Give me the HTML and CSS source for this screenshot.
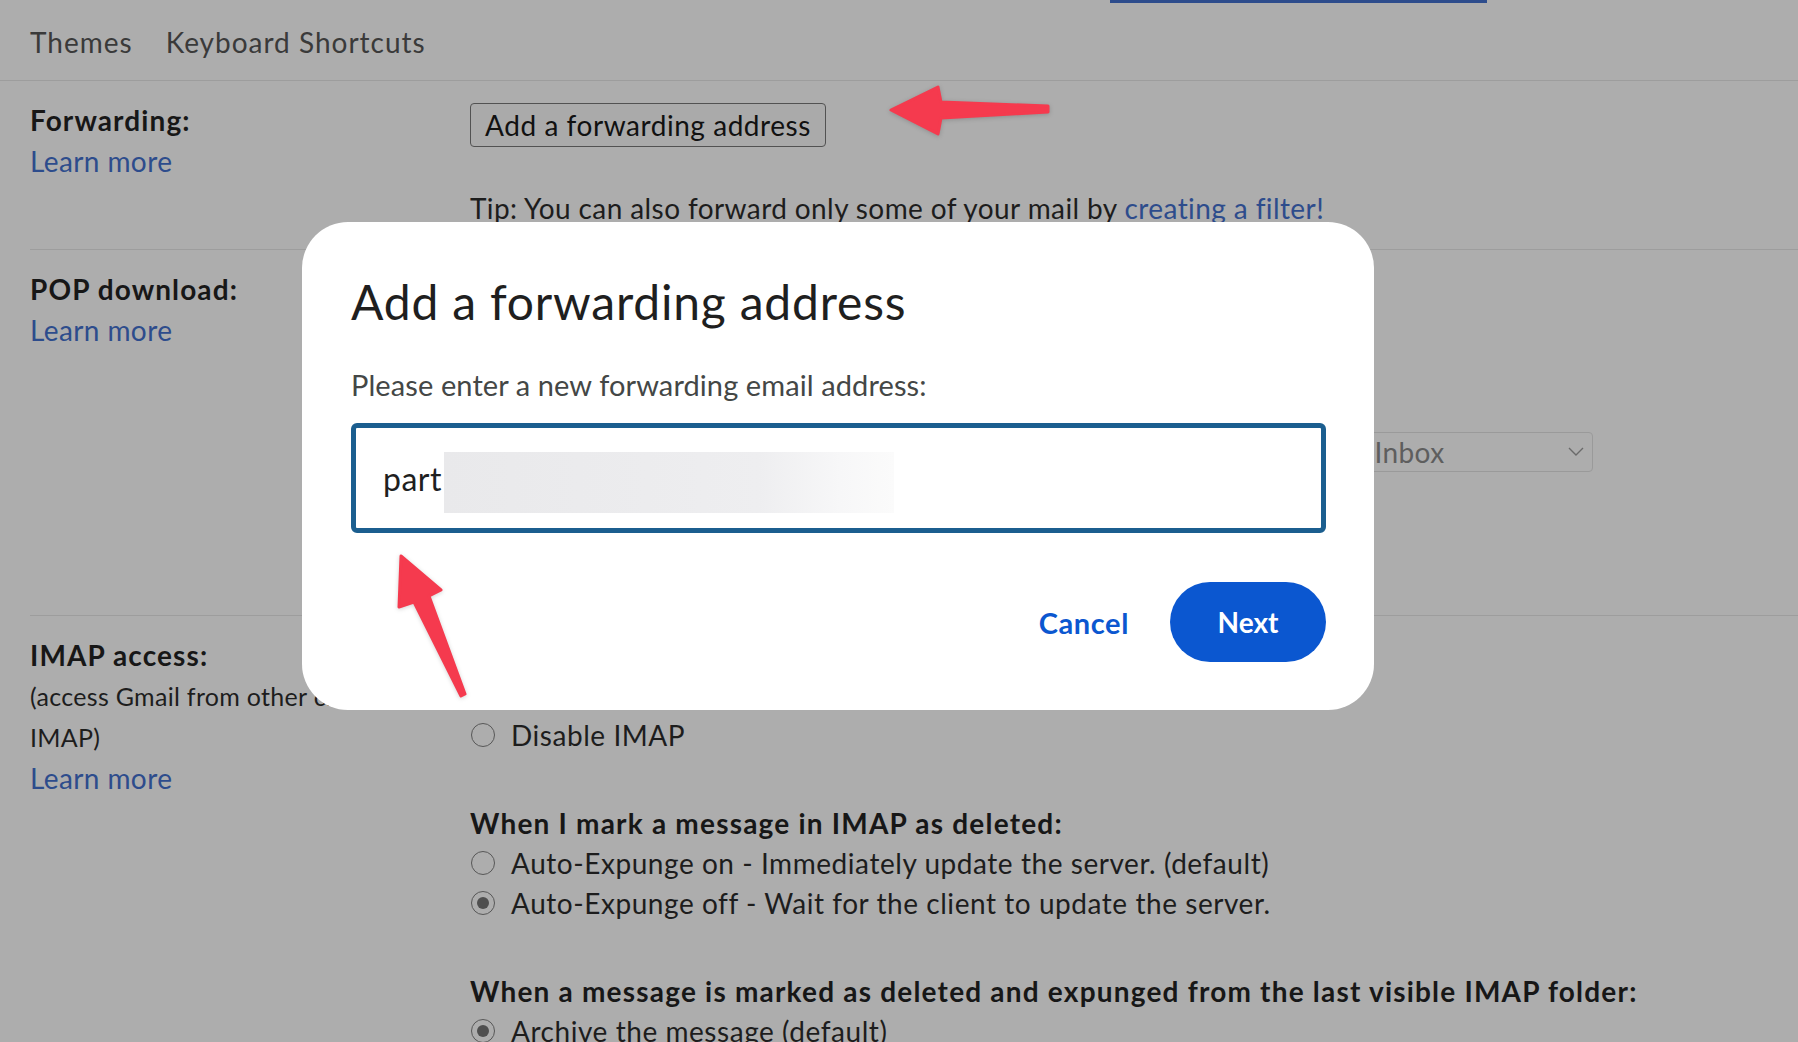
FILE: index.html
```html
<!DOCTYPE html>
<html lang="en">
<head>
<meta charset="utf-8">
<title>Settings – Forwarding and POP/IMAP</title>
<link rel="stylesheet" href="styles.css">
</head>
<body>
<div class="page">
  <div class="tabbar">
    <div class="indicator"></div>
    <nav class="tabs">
      <span class="tab">Themes</span>
      <span class="tab">Keyboard Shortcuts</span>
    </nav>
  </div>

  <div class="settings">
    <section class="row row-fwd">
      <div class="label">
        <div class="label-title">Forwarding:</div>
        <a class="link">Learn more</a>
      </div>
      <div class="content">
        <button class="gbtn">Add a forwarding address</button>
        <p class="tip">Tip: You can also forward only some of your mail by <a class="link">creating a filter!</a></p>
      </div>
    </section>

    <section class="row row-pop">
      <div class="label">
        <div class="label-title">POP download:</div>
        <a class="link">Learn more</a>
      </div>
      <div class="content">
        <div class="line"><b>1. Status: </b>POP is disabled</div>
        <label class="opt"><span class="radio"></span>Enable POP for <b>&nbsp;all mail</b></label>
        <label class="opt"><span class="radio"></span>Enable POP for <b>&nbsp;mail that arrives from now on</b></label>
        <div class="line pop-line gap"><b class="pop-q">2. When messages are accessed with POP</b>
          <div class="select"><span>keep Gmail's copy in the Inbox</span>
            <svg class="chev" viewBox="0 0 16 10" width="16" height="10"><polyline points="1,1 8,8 15,1" fill="none" stroke="#6a6a6a" stroke-width="1.4"/></svg>
          </div>
        </div>
        <div class="line gap"><b>3. Configure your email client</b> (e.g. Outlook, Eudora, Netscape Mail)</div>
        <div class="line"><a class="link">Configuration instructions</a></div>
      </div>
    </section>

    <section class="row row-imap">
      <div class="label">
        <div class="label-title">IMAP access:</div>
        <div class="label-note">(access Gmail from other clients using</div>
        <div class="label-note">IMAP)</div>
        <a class="link">Learn more</a>
      </div>
      <div class="content">
        <div class="line"><b>1. Status: </b>IMAP is disabled</div>
        <label class="opt"><span class="radio"></span>Enable IMAP</label>
        <label class="opt"><span class="radio"></span>Disable IMAP</label>
        <div class="line gap"><b>When I mark a message in IMAP as deleted:</b></div>
        <label class="opt"><span class="radio"></span>Auto-Expunge on - Immediately update the server. (default)</label>
        <label class="opt"><span class="radio checked"></span>Auto-Expunge off - Wait for the client to update the server.</label>
        <div class="line gap"><b>When a message is marked as deleted and expunged from the last visible IMAP folder:</b></div>
        <label class="opt"><span class="radio checked"></span>Archive the message (default)</label>
      </div>
    </section>
  </div>

  <svg class="arrow arrow-top" viewBox="0 0 170 58" width="170" height="58">
    <path d="M6 28 L53 5 L56 20 L163 24 L163 30 L56 36 L53 52 Z" fill="#f53a4e" stroke="#f53a4e" stroke-width="3" stroke-linejoin="round"/>
  </svg>

  <div class="dialog" role="dialog">
    <h2 class="dialog-title">Add a forwarding address</h2>
    <div class="dialog-label">Please enter a new forwarding email address:</div>
    <div class="email">
      <span class="typed">part</span>
      <span class="blur"></span>
    </div>
    <div class="actions">
      <button class="cancel">Cancel</button>
      <button class="next">Next</button>
    </div>
  </div>

  <svg class="arrow arrow-bottom" viewBox="0 0 80 152" width="80" height="152">
    <path d="M9 6 L49 40 L37 46 L73 144 L69 146 L22 52 L7 57 Z" fill="#f53a4e" stroke="#f53a4e" stroke-width="3" stroke-linejoin="round"/>
  </svg>
</div>
</body>
</html>
```

FILE: styles.css
```css
html, body {
  margin: 0;
  padding: 0;
}

body {
  background: #adadad;
  font-family: "Lato", "Noto Sans", sans-serif;
  color: #1d1d1d;
}

.page {
  position: relative;
  width: 1798px;
  height: 1042px;
  overflow: hidden;
  background: #adadad;
}

/* ---------- tab bar ---------- */
.tabbar {
  box-sizing: border-box;
  height: 81px;
  border-bottom: 1px solid #9d9d9d;
  display: flex;
  flex-direction: column;
}

.indicator {
  margin-left: 1110px;
  width: 377px;
  height: 3px;
  background: #2d4c8c;
}

.tabs {
  flex: 1;
  display: flex;
  align-items: center;
  gap: 33px;
  padding-left: 30px;
  font-size: 28px;
  letter-spacing: 1px;
  color: #3a3a3a;
}

/* ---------- settings rows ---------- */
.settings {
  margin-left: 30px;
}

.row {
  box-sizing: border-box;
  display: grid;
  grid-template-columns: 440px 1fr;
  padding-top: 19px;
}

.row + .row {
  border-top: 1px solid #9d9d9d;
}

.row-fwd { height: 168px; }
.row-pop { height: 366px; }

.label {
  display: flex;
  flex-direction: column;
  align-items: flex-start;
  font-size: 28px;
  letter-spacing: 0.4px;
  line-height: 41px;
}

.label-title {
  font-weight: 700;
  letter-spacing: 1.1px;
  color: #171717;
}

.label-note {
  font-size: 25px;
  letter-spacing: 0.3px;
  color: #1d1d1d;
}

.link {
  color: #2d4c8c;
  text-decoration: none;
}

.content {
  font-size: 28px;
  letter-spacing: 0.55px;
  line-height: 40px;
  color: #1d1d1d;
}

.content b {
  color: #171717;
  letter-spacing: 1.2px;
}

.gbtn {
  margin-top: 3px;
  box-sizing: border-box;
  height: 44px;
  padding: 0 14px;
  border: 1.5px solid #525252;
  border-radius: 4px;
  background: #aaaaaa;
  font-family: inherit;
  font-size: 28px;
  letter-spacing: 0.55px;
  color: #111;
}

.tip {
  margin: 41px 0 0;
  letter-spacing: 0.4px;
}

.line.gap {
  margin-top: 48px;
}

.pop-line.gap {
  margin-top: 43px;
}

.pop-line {
  display: flex;
  align-items: center;
}

.pop-q {
  flex: none;
  width: 580px;
}

.select {
  box-sizing: border-box;
  width: 543px;
  height: 40px;
  border: 1px solid #9a9a9a;
  border-radius: 4px;
  display: flex;
  align-items: center;
  justify-content: space-between;
  padding: 0 8px 0 10px;
  letter-spacing: 0.4px;
  color: #5e5e5e;
}

.opt {
  display: flex;
  align-items: center;
  gap: 16px;
  height: 40px;
}

.radio {
  flex: none;
  box-sizing: border-box;
  width: 24px;
  height: 24px;
  margin-left: 1px;
  border: 1.5px solid #575757;
  border-radius: 50%;
  display: flex;
  align-items: center;
  justify-content: center;
}

.radio.checked::after {
  content: "";
  width: 12px;
  height: 12px;
  border-radius: 50%;
  background: #4f4f4f;
}

/* ---------- dialog ---------- */
.dialog {
  position: absolute;
  left: 302px;
  top: 222px;
  width: 1072px;
  height: 488px;
  box-sizing: border-box;
  padding: 53px 48px 48px 49px;
  background: #ffffff;
  border-radius: 46px;
  display: flex;
  flex-direction: column;
}

.dialog-title {
  margin: 0;
  font-size: 48px;
  letter-spacing: 0.8px;
  line-height: 54px;
  font-weight: 400;
  color: #1f1f1f;
}

.dialog-label {
  margin-top: 38px;
  font-size: 29px;
  letter-spacing: 0.1px;
  line-height: 36px;
  color: #444746;
}

.email {
  margin-top: 20px;
  box-sizing: border-box;
  height: 110px;
  border: 5px solid #1b5e8f;
  border-radius: 6px;
  display: flex;
  align-items: center;
  padding-left: 27px;
}

.typed {
  font-size: 32px;
  letter-spacing: 0.5px;
  color: #1f1f1f;
}

.blur {
  margin-left: 2px;
  margin-top: 8px;
  width: 450px;
  height: 61px;
  background: linear-gradient(90deg, #e9e9eb 0%, #ececee 45%, #eeeef0 70%, #f7f7f8 88%, #fbfbfb 100%);
}

.actions {
  margin-top: 49px;
  display: flex;
  justify-content: flex-end;
  align-items: center;
  gap: 17px;
}

.cancel {
  height: 80px;
  padding: 0 24px;
  border: none;
  background: transparent;
  font-family: inherit;
  font-size: 29px;
  letter-spacing: 0.6px;
  font-weight: 700;
  color: #0b57d0;
}

.next {
  width: 156px;
  height: 80px;
  border: none;
  border-radius: 40px;
  background: #0b57d0;
  font-family: inherit;
  font-size: 28px;
  font-weight: 700;
  color: #ffffff;
}

/* ---------- annotation arrows ---------- */
.arrow {
  position: absolute;
  filter: drop-shadow(0 1px 2px rgba(0, 0, 0, 0.18));
}

.arrow-top {
  left: 885px;
  top: 82px;
}

.arrow-bottom {
  left: 392px;
  top: 550px;
}
```
